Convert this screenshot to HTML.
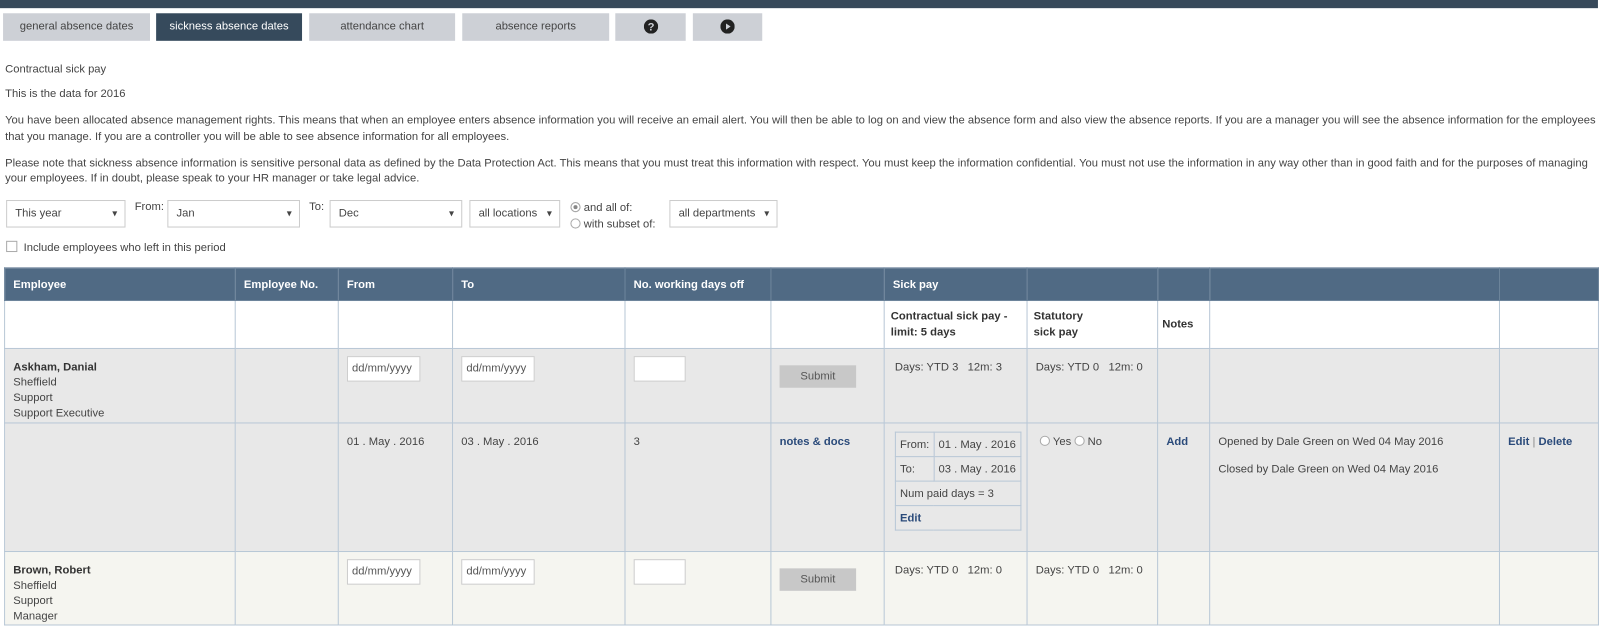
<!DOCTYPE html>
<html><head><meta charset="utf-8"><style>
body{margin:0;width:1600px;height:629px;background:#fff;overflow:hidden}
#w{position:absolute;left:0;top:0;width:1568px;height:616px;transform:scale(1.0204);transform-origin:0 0;font-family:"Liberation Sans",sans-serif;font-size:11px;color:#444}
.a{position:absolute;white-space:nowrap}
.bar{left:0;top:0;width:1566px;height:8px;background:#37495a}
.tab{position:absolute;top:13px;height:27px;background:#cdd0d6;color:#444;font-size:11px;text-align:center;line-height:27px}
.tab.on{background:#364a5c;color:#fff}
.sel{position:absolute;top:196px;height:27px;border:1px solid #ccc;box-sizing:border-box;background:#fff;font-size:11px;line-height:25px;padding-left:8px;color:#444}
.sel:after{content:"▾";position:absolute;right:7px;top:0;font-size:10px}
table.m{position:absolute;left:4px;top:262px;border-collapse:collapse;table-layout:fixed;width:1562px}
td,th{border:1px solid #b8c7d6;vertical-align:top;padding:0 8px;text-align:left;font-size:11px;box-sizing:border-box}
th{background:#506a84;color:#fff;vertical-align:middle;font-weight:bold;border-color:#6d849b}
.sub td{background:#fff;vertical-align:middle;font-weight:bold;color:#333}
.r1 td,.r2 td{background:#e8e8e8}
.r3 td{background:#f5f5f0}
.inp{display:inline-block;width:72px;height:25px;border:1px solid #ccc;background:#fff;box-sizing:border-box;margin-top:7px;font-size:11px;line-height:23px;padding-left:4px;color:#555}
.btn{display:inline-block;width:75px;height:22px;background:#c8c8c8;margin-top:16px;text-align:center;line-height:22px;color:#555}
.lnk{color:#2a4a7a;font-weight:bold}
.pt{padding-top:11px;line-height:15px}
.ib{border-collapse:collapse;margin-top:8px;width:122px}
.ib td{background:#e8e8e8;height:24px;border:1px solid #b8c7d6;padding:0 4px;vertical-align:middle;white-space:nowrap}
.rad{display:inline-block;width:8px;height:8px;border:1px solid #aaa;border-radius:50%;background:#fff;vertical-align:-1px}
</style></head><body><div id="w">
<div class="a bar"></div>
<div class="tab" style="left:3px;width:144px">general absence dates</div>
<div class="tab on" style="left:153px;width:143px">sickness absence dates</div>
<div class="tab" style="left:303px;width:143px">attendance chart</div>
<div class="tab" style="left:453px;width:144px">absence reports</div>
<div class="tab" style="left:603px;width:69px"><svg width="14" height="14" viewBox="0 0 14 14" style="margin-top:6px"><circle cx="7" cy="7" r="7" fill="#222"/><text x="7" y="11" font-size="11" font-weight="bold" fill="#cdd0d6" text-anchor="middle" font-family="Liberation Sans">?</text></svg></div>
<div class="tab" style="left:679px;width:68px"><svg width="14" height="14" viewBox="0 0 14 14" style="margin-top:6px"><circle cx="7" cy="7" r="7" fill="#222"/><path d="M5.5 4L10 7L5.5 10Z" fill="#cdd0d6"/></svg></div>
<div class="a" style="left:5px;top:62px">Contractual sick pay</div>
<div class="a" style="left:5px;top:86px">This is the data for 2016</div>
<div class="a" style="left:5px;top:112px">You have been allocated absence management rights. This means that when an employee enters absence information you will receive an email alert. You will then be able to log on and view the absence form and also view the absence reports. If you are a manager you will see the absence information for the employees</div>
<div class="a" style="left:5px;top:128px">that you manage. If you are a controller you will be able to see absence information for all employees.</div>
<div class="a" style="left:5px;top:154px">Please note that sickness absence information is sensitive personal data as defined by the Data Protection Act. This means that you must treat this information with respect. You must keep the information confidential. You must not use the information in any way other than in good faith and for the purposes of managing</div>
<div class="a" style="left:5px;top:169px">your employees. If in doubt, please speak to your HR manager or take legal advice.</div>
<div class="sel" style="left:6px;width:117px">This year</div>
<div class="a" style="left:132px;top:197px">From:</div>
<div class="sel" style="left:164px;width:130px">Jan</div>
<div class="a" style="left:303px;top:197px">To:</div>
<div class="sel" style="left:323px;width:130px">Dec</div>
<div class="sel" style="left:460px;width:89px">all locations</div>
<div class="a" style="left:559px;top:198px"><span class="rad" style="background:#888;box-shadow:inset 0 0 0 2px #fff"></span> and all of:</div>
<div class="a" style="left:559px;top:214px"><span class="rad"></span> with subset of:</div>
<div class="sel" style="left:656px;width:106px">all departments</div>
<div class="a" style="left:6px;top:236px"><span style="display:inline-block;width:9px;height:9px;border:1px solid #aaa;vertical-align:-1px"></span>&nbsp; Include employees who left in this period</div>
<table class="m">
<colgroup><col style="width:226px"><col style="width:101px"><col style="width:112px"><col style="width:169px"><col style="width:143px"><col style="width:111px"><col style="width:140px"><col style="width:128px"><col style="width:51px"><col style="width:284px"><col style="width:97px"></colgroup>
<tr style="height:32px"><th>Employee</th><th>Employee No.</th><th>From</th><th>To</th><th>No. working days off</th><th></th><th>Sick pay</th><th></th><th></th><th></th><th></th></tr>
<tr class="sub" style="height:47px"><td></td><td></td><td></td><td></td><td></td><td></td><td style="line-height:16px;padding-left:6px">Contractual sick pay -<br>limit: 5 days</td><td style="line-height:16px;padding-left:6px">Statutory<br>sick pay</td><td style="padding-left:4px">Notes</td><td></td><td></td></tr>
<tr class="r1" style="height:73px"><td class="pt"><b style="color:#333">Askham, Danial</b><br>Sheffield<br>Support<br>Support Executive</td><td></td><td><span class="inp">dd/mm/yyyy</span></td><td><span class="inp">dd/mm/yyyy</span></td><td><span class="inp" style="width:51px"></span></td><td><span class="btn">Submit</span></td><td class="pt" style="padding-left:10px">Days: YTD 3 &nbsp; 12m: 3</td><td class="pt">Days: YTD 0 &nbsp; 12m: 0</td><td></td><td></td><td></td></tr>
<tr class="r2" style="height:126px"><td></td><td></td><td class="pt">01 . May . 2016</td><td class="pt">03 . May . 2016</td><td class="pt">3</td><td class="pt lnk">notes &amp; docs</td><td style="padding-left:10px"><table class="ib"><tr><td style="width:30px">From:</td><td>01 . May . 2016</td></tr><tr><td>To:</td><td>03 . May . 2016</td></tr><tr><td colspan="2">Num paid days = 3</td></tr><tr><td colspan="2" class="lnk">Edit</td></tr></table></td><td class="pt" style="padding-left:12px"><span class="rad"></span> Yes <span class="rad"></span> No</td><td class="pt lnk">Add</td><td class="pt" style="line-height:27px;padding-top:5px">Opened by Dale Green on Wed 04 May 2016<br>Closed by Dale Green on Wed 04 May 2016</td><td class="pt lnk">Edit <span style="color:#888;font-weight:normal">|</span> Delete</td></tr>
<tr class="r3" style="height:72px"><td class="pt"><b style="color:#333">Brown, Robert</b><br>Sheffield<br>Support<br>Manager</td><td></td><td><span class="inp">dd/mm/yyyy</span></td><td><span class="inp">dd/mm/yyyy</span></td><td><span class="inp" style="width:51px"></span></td><td><span class="btn">Submit</span></td><td class="pt" style="padding-left:10px">Days: YTD 0 &nbsp; 12m: 0</td><td class="pt">Days: YTD 0 &nbsp; 12m: 0</td><td></td><td></td><td></td></tr>
</table>
</div></body></html>
